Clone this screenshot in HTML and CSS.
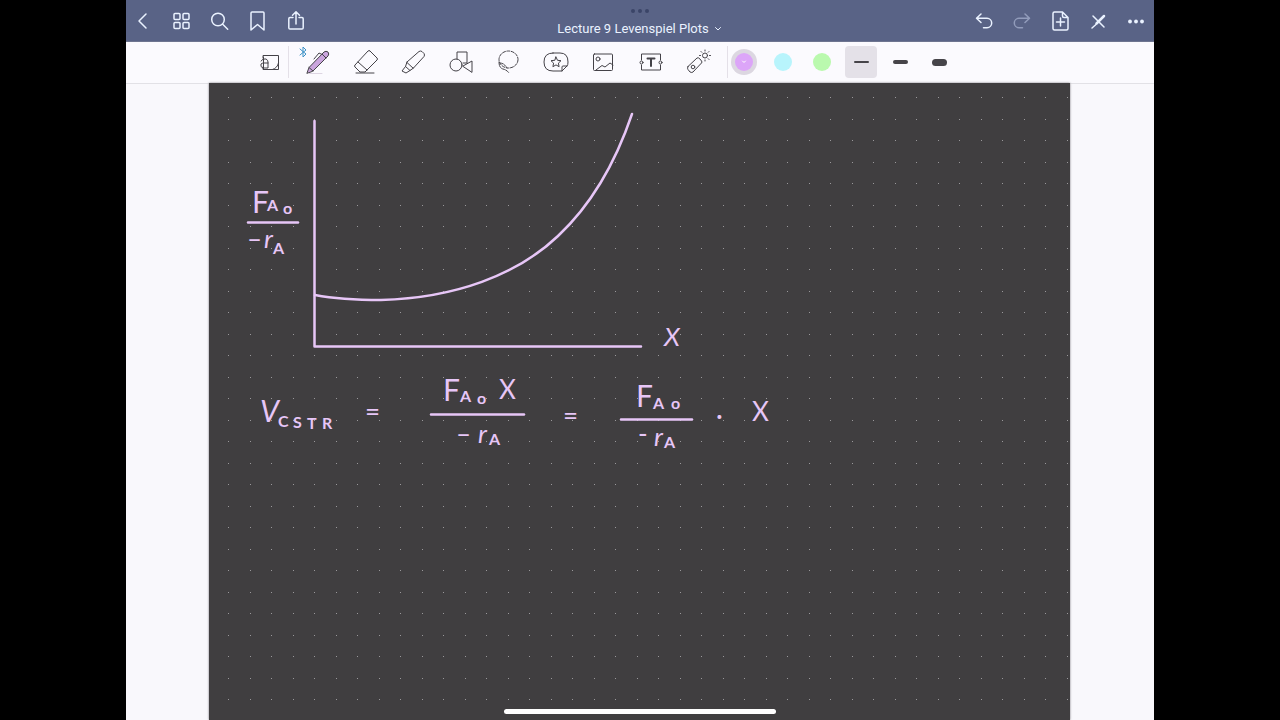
FILE: index.html
```
<!DOCTYPE html>
<html lang="en">
  <head>
    <title>Lecture 9 Levenspiel Plots</title>
    <meta charset="UTF-8">
    <meta name="viewport" content="width=device-width, initial-scale=1">
    <link rel="stylesheet" href="styles.css">
  </head>
  <body>
    <div class="app">
      <header class="topbar">
        <nav class="group">
          <button aria-label="Back"><svg viewBox="0 0 24 24"><path d="M15 5l-7 7 7 7"/></svg></button>
          <button aria-label="Pages"><svg viewBox="0 0 24 24"><rect x="5" y="4.500" width="6" height="6" rx="1"/><rect x="14" y="4.500" width="6" height="6" rx="1"/><rect x="5" y="13.500" width="6" height="6" rx="1"/><rect x="14" y="13.500" width="6" height="6" rx="1"/></svg></button>
          <button aria-label="Search"><svg viewBox="0 0 24 24"><circle cx="11" cy="10.500" r="6.300"/><path d="M15.700 15.200l5 5"/></svg></button>
          <button aria-label="Bookmark"><svg viewBox="0 0 24 24"><path d="M6 4q0-1 1-1h11q1 0 1 1v17l-6.500-5.500L6 21z"/></svg></button>
          <button aria-label="Share"><svg viewBox="0 0 24 24"><path d="M10 8.500H7q-1.200 0-1.200 1.200v9q0 1.300 1.200 1.300h12q1.200 0 1.200-1.300v-9q0-1.200-1.200-1.200h-3M13 15V3M9.500 6.200L13 2.800l3.500 3.400"/></svg></button>
        </nav>
        <div class="title">
          <span class="dots"><i></i><i></i><i></i></span>
          <button class="name">Lecture 9 Levenspiel Plots <svg viewBox="0 0 8 8"><path d="M1.500 2.500L4 5l2.500-2.500"/></svg></button>
        </div>
        <div class="group right">
          <button aria-label="Undo"><svg viewBox="0 0 24 24"><path d="M9 5L4.500 9.300 9 13.500M5 9.300h10a4.700 4.700 0 0 1 0 9.400h-3.500"/></svg></button>
          <button aria-label="Redo" disabled><svg viewBox="0 0 24 24"><path d="M15 5l4.500 4.300L15 13.500M19 9.300H9a4.700 4.700 0 0 0 0 9.400h3.500"/></svg></button>
          <button aria-label="Add page"><svg viewBox="0 0 24 24"><path d="M14.500 3H6.500Q5 3 5 4.500v15Q5 21 6.500 21h12q1.500 0 1.500-1.500V8.500zM14.500 3v4q0 1.500 1.500 1.500h4M12.500 9v8M8.500 13h8"/></svg></button>
          <button aria-label="Stop editing"><svg viewBox="0 0 24 24"><path d="M7 7l11 11"/><path d="M18 7l-7.500 7.500" class="thick"/><path d="M10 15.500L6 19"/></svg></button>
          <button aria-label="More"><svg viewBox="0 0 24 24" class="solid"><circle cx="6" cy="12.500" r="1.900"/><circle cx="12" cy="12.500" r="1.900"/><circle cx="18" cy="12.500" r="1.900"/></svg></button>
        </div>
      </header>

      <div class="toolbar">
        <button aria-label="Zoom window"><svg viewBox="0 0 28 28"><path d="M7 10V7.500h15.500v14H7V19M22.500 15q-1 5-6 6.500"/><path d="M5 13q2-3 5-2 2 1 2 3v6H7q-3-1-2-4 1-1 3-1h4M7.500 9v12"/></svg></button>
        <span class="divider"></span>
        <div class="tools">
          <button aria-label="Pen" class="pen">
            <svg viewBox="0 0 28 28"><path d="M3 25l2-5.500L20 4q2-1.500 4 0 1.500 2 0 4L9 23z" fill="#caa5dd"/><path d="M5 19.500L9 23M18 6l4 4M17 6l-2-1-5 6"/><path d="M5 25.500h13" stroke="#ddd5e2"/></svg>
            <svg class="bluetooth" viewBox="0 0 8 12"><path d="M1 3l6 5-3 3V1l3 3-6 5"/></svg>
          </button>
          <button aria-label="Eraser"><svg viewBox="0 0 28 28"><path d="M18 3l7 7q1 1 0 2L13 24H8l-5-5q-1-1 0-2L16 3q1-1 2 0zM6 14l9 8M4 25h18"/></svg></button>
          <button aria-label="Highlighter"><svg viewBox="0 0 28 28"><path d="M8 14L20 3.500q1.500-1 3 0l2 2q1 1.500 0 3L14.500 20zM8 14l-1.500 4.500 4.500 4 3.500-2.500M6.500 18.500L3 23l4 2 4-2.500"/></svg></button>
          <button aria-label="Shapes"><svg viewBox="0 0 28 28"><path d="M10 11V4h10v11h-4M16 18l9-5v11z"/><circle cx="9" cy="17" r="6"/></svg></button>
          <button aria-label="Lasso"><svg viewBox="0 0 28 28"><ellipse cx="14.500" cy="11.500" rx="9.500" ry="8.500" stroke-dasharray="3 1.500"/><path d="M5 14q0 6 4 7t6 4M6 15q4 0 7 5" stroke-dasharray="3 1"/></svg></button>
          <button aria-label="Elements"><svg viewBox="0 0 28 28"><path d="M11 5h7q8 0 8 9 0 3-1 4l-5 5h-9q-9 0-9-9t9-9zM20 23v-4q0-1 1-1h4"/><path d="M14 9l1.500 3.300 3.500.4-2.600 2.400.7 3.600-3.100-1.800-3.100 1.800.7-3.600L9 12.700l3.500-.4z"/></svg></button>
          <button aria-label="Image"><svg viewBox="0 0 28 28"><rect x="4.500" y="6" width="19" height="16.500" rx="1"/><circle cx="9" cy="11" r="2"/><path d="M7 22l6-4.500 3 1.500 5-4 3 2"/></svg></button>
          <button aria-label="Text"><svg viewBox="0 0 28 28"><path d="M4.500 12V6h19v6M4.500 17v5h19v-5"/><circle cx="4.500" cy="14.500" r="1.500"/><circle cx="23.500" cy="14.500" r="1.500"/><path d="M10.500 10.500h7M14 10.500V18" stroke-width="2"/></svg></button>
          <button aria-label="Laser pointer"><svg viewBox="0 0 28 28"><path d="M4 18.500L13 10q1-1 3 1l1.500 2q1 1 0 2L9 24q-1 1-3 0l-2-2.500q-1-1 0-3z"/><circle cx="9" cy="19" r="1.800"/><circle cx="21" cy="7.500" r="2.500"/><path d="M21 2v1M21 12v1M15.500 7.500h1M25.500 7.500h1M17 3.500l.8.800M25 3.500l-.8.800M25 11.500l-.8-.8"/></svg></button>
        </div>
        <span class="divider"></span>
        <div class="presets">
          <button aria-label="Purple" class="swatch purple selected"><svg viewBox="0 0 8 8"><path d="M2.500 3L4 4.500 5.500 3"/></svg></button>
          <button aria-label="Blue" class="swatch blue"></button>
          <button aria-label="Green" class="swatch green"></button>
          <button aria-label="Thin" class="stroke thin active"><i></i></button>
          <button aria-label="Medium" class="stroke medium"><i></i></button>
          <button aria-label="Thick" class="stroke heavy"><i></i></button>
        </div>
      </div>

      <main class="desk">
        <div class="paper">
          <svg class="ink" viewBox="209 83 861 637">
            <!-- axes and curve -->
            <path d="M314.500 121V346.500H641"/>
            <path d="M315 295C336 299 361 300 381 300C455 298 517 275 558 236C590 206 615 164 632 114"/>
            <text x="664" y="346" class="mid slant">X</text>

            <!-- y axis label -->
            <text x="252" y="213">F</text>
            <text x="267" y="211" class="sub">A</text>
            <text x="283" y="214" class="sub">o</text>
            <path d="M248 222.500H298"/>
            <text x="247" y="248" class="mid">–</text>
            <text x="264" y="248" class="mid slant">r</text>
            <text x="273" y="254" class="sub">A</text>

            <!-- reactor volume -->
            <text x="260" y="422" class="slant">V</text>
            <text x="278" y="427" class="sub">C</text>
            <text x="293" y="428" class="sub">S</text>
            <text x="307" y="429" class="sub">T</text>
            <text x="322" y="429" class="sub">R</text>
            <text x="365" y="421" class="mid">=</text>

            <text x="443" y="401">F</text>
            <text x="460" y="402" class="sub">A</text>
            <text x="477" y="404" class="sub">o</text>
            <text x="499" y="399" class="mid">X</text>
            <path d="M431 414.500H524"/>
            <text x="456" y="443" class="mid">–</text>
            <text x="478" y="443" class="mid slant">r</text>
            <text x="489" y="445" class="sub">A</text>
            <text x="563" y="425" class="mid">=</text>

            <text x="636" y="407">F</text>
            <text x="653" y="409" class="sub">A</text>
            <text x="671" y="409" class="sub">o</text>
            <path d="M621 419.500H692"/>
            <text x="638" y="443" class="mid">-</text>
            <text x="654" y="446" class="mid slant">r</text>
            <text x="664" y="448" class="sub">A</text>
            <text x="716" y="425" class="mid">·</text>
            <text x="752" y="421" class="mid">X</text>
          </svg>
        </div>
        <div class="home"></div>
      </main>
    </div>
  </body>
</html>
```
FILE: styles.css
```
* {
  box-sizing: border-box;
}
body {
  margin: 0;
  background: black;
  font-family: Roboto, "Liberation Sans", sans-serif;
}
button {
  margin: 0;
  padding: 0;
  border: 0;
  background: none;
  color: inherit;
  font: inherit;
  cursor: pointer;
}
svg {
  display: block;
  fill: none;
  stroke: currentColor;
  stroke-linecap: round;
  stroke-linejoin: round;
}
.app {
  display: flex;
  flex-direction: column;
  height: 100vh;
  margin: 0 126px;
  overflow: hidden;
}

/* top bar */
.topbar {
  display: grid;
  grid-template-columns: 1fr auto 1fr;
  flex: none;
  height: 42px;
  padding: 0 6px 0 5px;
  background: #596386;
  border-bottom: 1px solid #6e7590;
  color: #eaf2ff;
}
.group {
  display: flex;
  align-items: center;
  gap: 14px;
}
.right {
  justify-content: flex-end;
}
.group svg {
  width: 24px;
  height: 24px;
  stroke-width: 1.5;
}
.group .thick {
  stroke-width: 2.5;
}
.group .solid {
  fill: currentColor;
  stroke: none;
}
.group button:disabled {
  color: #929cbb;
}
.title {
  display: flex;
  flex-direction: column;
  align-items: center;
  gap: 7px;
  padding-top: 9px;
}
.dots {
  display: flex;
  gap: 3px;
}
.dots i {
  width: 4px;
  height: 4px;
  border-radius: 50%;
  background: #3b4568;
}
.name {
  display: flex;
  align-items: center;
  gap: 5px;
  font-size: 13px;
  line-height: 18px;
}
.name svg {
  width: 8px;
  height: 8px;
}

/* tools */
.toolbar {
  display: flex;
  align-items: center;
  flex: none;
  height: 41px;
  padding: 0 0 1px 130px;
  background: #fbfafe;
  color: #444248;
}
.toolbar svg {
  width: 28px;
  height: 28px;
}
.divider {
  width: 1px;
  height: 32px;
  margin-left: 4px;
  background: #e4e0e8;
}
.tools {
  display: flex;
  justify-content: space-between;
  width: 408px;
  margin: 0 11px 0 15px;
}
.pen {
  position: relative;
}
.toolbar .bluetooth {
  position: absolute;
  top: -2px;
  left: -5px;
  width: 8px;
  height: 12px;
  color: #3c91c6;
}
.presets {
  display: flex;
  gap: 7px;
}
.presets button {
  display: flex;
  align-items: center;
  justify-content: center;
  width: 32px;
  height: 32px;
}
.swatch::before {
  content: "";
  width: 18px;
  height: 18px;
  border-radius: 50%;
  background: currentColor;
}
.swatch.selected::before {
  box-shadow: 0 0 0 4px #dcd7e1;
}
.swatch svg {
  position: absolute;
  width: 8px;
  height: 8px;
  color: white;
}
.purple {
  color: #dca5f8;
}
.blue {
  color: #b8f4fc;
}
.green {
  color: #baf9ae;
}
.stroke.active {
  border-radius: 4px;
  background: #e4e1e8;
}
.stroke i {
  width: 15px;
  border-radius: 4px;
  background: #464449;
}
.thin i {
  height: 2px;
}
.medium i {
  height: 4px;
}
.heavy i {
  height: 7px;
}

/* note page */
.desk {
  position: relative;
  flex: 1;
  min-height: 0;
  padding: 0 84px 0 83px;
  background: #f9f8fc;
  box-shadow: inset 0 1px #e2e1e6;
}
.paper {
  position: relative;
  height: 100%;
  background-color: #403e40;
  background-image:
    radial-gradient(circle, #9a989b 0, transparent 1px),
    radial-gradient(circle, #9a989b 0, transparent 1px),
    radial-gradient(circle, #9a989b 0, transparent 1px),
    radial-gradient(circle, #9a989b 0, transparent 1px);
  background-size: 43px 43px;
  background-position: -2px -7px, 20px -7px, -2px 15px, 20px 15px;
  box-shadow: 0 0 2px #777579;
}
.ink {
  width: 100%;
  color: #e7c6f7;
  stroke-width: 2.5;
}
.ink text {
  fill: currentColor;
  stroke: none;
  font-family: Lato, sans-serif;
  font-size: 30px;
}
.ink .mid {
  font-size: 26px;
}
.ink .sub {
  font-size: 16px;
  font-weight: bold;
}
.ink .slant {
  font-style: italic;
}
.home {
  position: absolute;
  bottom: 6px;
  left: 50%;
  width: 272px;
  height: 5px;
  border-radius: 3px;
  background: white;
  transform: translateX(-50%);
}
```
